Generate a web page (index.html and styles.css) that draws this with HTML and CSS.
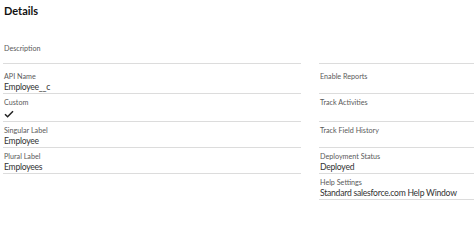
FILE: index.html
```html
<!DOCTYPE html>
<html>
<head>
<meta charset="utf-8">
<link rel="stylesheet" href="styles.css">
</head>
<body>
<h1 class="title">Details</h1>
<div class="grid">
  <div class="cell first"><div class="label">Description</div><div class="value empty"></div></div>
  <div class="cell first"></div>

  <div class="cell top"><div class="label">API Name</div><div class="value">Employee__c</div></div>
  <div class="cell top"><div class="label">Enable Reports</div><div class="value"></div></div>

  <div class="cell"><div class="label">Custom</div><div class="value"><svg class="check" width="10" height="8" viewBox="0 0 10 8"><path d="M1 4.2 L3.6 6.8 L9 1.2" fill="none" stroke="#222" stroke-width="1.5"/></svg></div></div>
  <div class="cell"><div class="label">Track Activities</div><div class="value"></div></div>

  <div class="cell"><div class="label">Singular Label</div><div class="value">Employee</div></div>
  <div class="cell"><div class="label">Track Field History</div><div class="value"></div></div>

  <div class="cell"><div class="label">Plural Label</div><div class="value">Employees</div></div>
  <div class="cell"><div class="label">Deployment Status</div><div class="value">Deployed</div></div>

  <div class="blank"></div>
  <div class="cell"><div class="label">Help Settings</div><div class="value">Standard salesforce.com Help Window</div></div>
</div>
</body>
</html>
```
FILE: styles.css
```css
html, body {
  margin: 0;
  padding: 0;
  background: #ffffff;
}
body {
  font-family: Lato, "Open Sans", sans-serif;
  color: #222;
}
.title {
  margin: 0;
  padding: 4px 0 0 4px;
  font-size: 11px;
  line-height: 13px;
  font-weight: 700;
  color: #111;
}
.grid {
  display: grid;
  grid-template-columns: 298px 155px;
  column-gap: 18px;
  padding-left: 3px;
}
.cell {
  padding: 3px 0 0 1px;
  border-bottom: 1px solid #dcdcdc;
}
.cell.first {
  padding-top: 26px;
}
.cell.top {
  padding-top: 7px;
}
.label {
  font-size: 7.2px;
  line-height: 11px;
  color: #5a5a5a;
}
.value {
  font-size: 8.6px;
  line-height: 11px;
  height: 11px;
  letter-spacing: -0.25px;
  font-weight: 400;
  color: #333;
}
.value.empty {
  height: 9px;
}
.check {
  display: block;
  margin-top: 2px;
}
```
